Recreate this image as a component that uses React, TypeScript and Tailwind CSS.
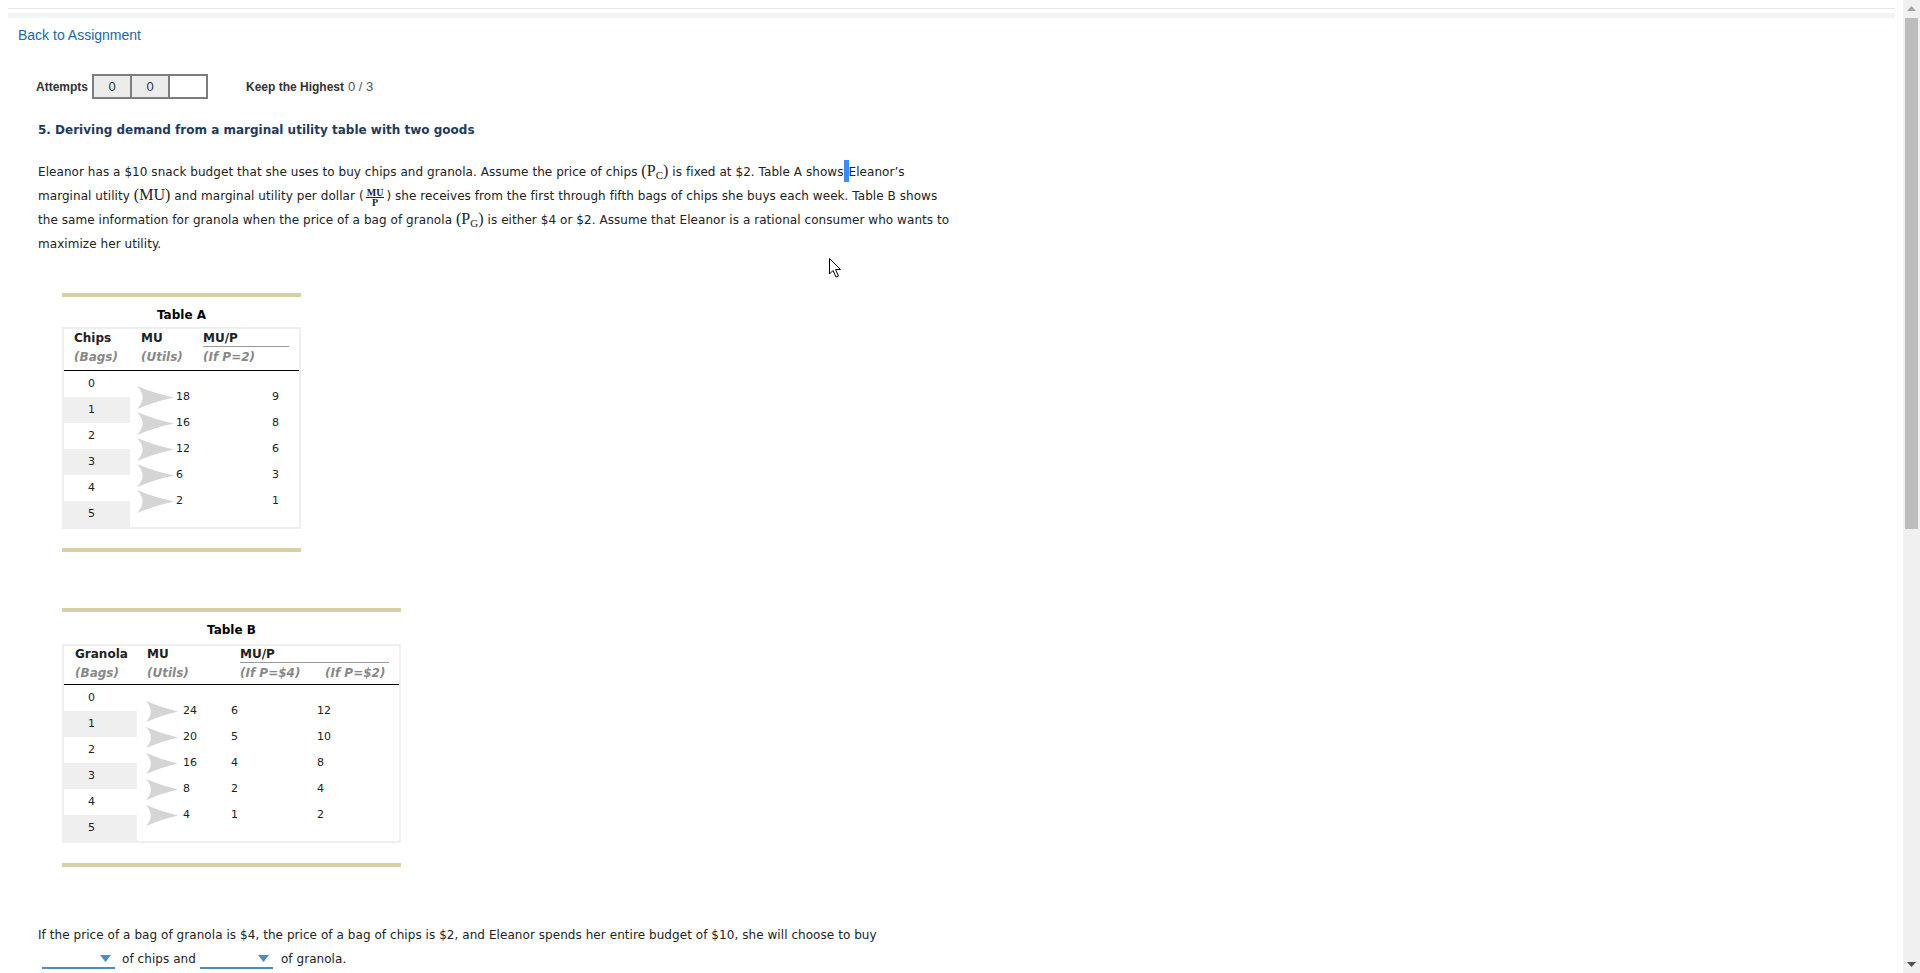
import React from "react";

const sans = "font-['DejaVu_Sans',Verdana,sans-serif]";
const arial = "font-['Liberation_Sans',Arial,sans-serif]";
const serif = "font-['Liberation_Serif','Times_New_Roman',serif]";

const chips = [
  { mu: 18, p2: 9 },
  { mu: 16, p2: 8 },
  { mu: 12, p2: 6 },
  { mu: 6, p2: 3 },
  { mu: 2, p2: 1 },
];

const granola = [
  { mu: 24, p4: 6, p2: 12 },
  { mu: 20, p4: 5, p2: 10 },
  { mu: 16, p4: 4, p2: 8 },
  { mu: 8, p4: 2, p2: 4 },
  { mu: 4, p4: 1, p2: 2 },
];

const Arrow = ({ w, h }: { w: number; h: number }) => (
  <svg width={w} height={h} viewBox="0 0 40 24" preserveAspectRatio="none" className="shrink-0">
    <path d="M0 0 Q20 8 40 12 Q20 16 0 24 Q12 12 0 0 Z" fill="#d5d5d5" />
  </svg>
);

const Caret = () => (
  <svg width="11" height="7" viewBox="0 0 11 7" className="absolute right-[4px] top-[6px]">
    <path d="M0 0 H11 L5.5 7 Z" fill="#4a8bc8" />
  </svg>
);

const Dropdown = () => (
  <span className="relative block h-[20px] w-[73px] border-b-2 border-[#4a8bc8]">
    <Caret />
  </span>
);

const Frac = () => (
  <span className="mx-[2px] inline-flex h-[18px] flex-col items-center align-middle leading-[9px]">
    <span className={`${serif} border-b border-[#222] px-[1px] text-[10px] font-bold leading-[9px]`}>MU</span>
    <span className={`${serif} text-[10px] font-bold leading-[9px]`}>P</span>
  </span>
);

const Sub = ({ s }: { s: string }) => (
  <span className={`${serif} text-[16px] leading-none`}>
    (P<sub className="text-[11px]">{s}</sub>)
  </span>
);

const TableA = () => (
  <div className="ml-[62px] mt-[37px] w-[239px]">
    <div className="h-[4px] bg-[#d9cfa6]" />
    <div className="mt-[10px] text-center text-[12px] font-bold leading-[16px] text-black">Table A</div>
    <div className="mt-[4px] border-2 border-[#efefef] bg-white">
      <div className="flex h-[42px] border-b border-black pt-[1px] text-[12px]">
        <div className="w-[66px] pl-[10px]">
          <div className="h-[17px] font-bold leading-[17px]">Chips</div>
          <div className="mt-[1px] font-bold italic leading-[18px] text-[#888]">(Bags)</div>
        </div>
        <div className="w-[73px] pl-[11px]">
          <div className="h-[17px] font-bold leading-[17px]">MU</div>
          <div className="mt-[1px] font-bold italic leading-[18px] text-[#888]">(Utils)</div>
        </div>
        <div className="flex-1">
          <div className="h-[17px] w-[86px] border-b border-[#999] font-bold leading-[16px]">MU/P</div>
          <div className="mt-[1px] font-bold italic leading-[18px] text-[#888]">(If P=2)</div>
        </div>
      </div>
      <div className="flex text-[11px]">
        <div className="w-[66px]">
          {[0, 1, 2, 3, 4, 5].map((n) => (
            <div key={n} className={`h-[26px] pl-[24px] leading-[26px] ${n % 2 ? "bg-[#efefef]" : ""}`}>
              {n}
            </div>
          ))}
        </div>
        <div className="flex-1 pt-[13px]">
          {chips.map((r) => (
            <div key={r.mu} className="flex h-[26px] items-center">
              <div className="flex w-[73px] items-center gap-[2px] pl-[7px]">
                <Arrow w={37} h={23} />
                <span>{r.mu}</span>
              </div>
              <div className="pl-[69px]">{r.p2}</div>
            </div>
          ))}
        </div>
      </div>
    </div>
    <div className="mt-[19px] h-[4px] bg-[#d9cfa6]" />
  </div>
);

const TableB = () => (
  <div className="ml-[62px] mt-[56px] w-[339px]">
    <div className="h-[4px] bg-[#d9cfa6]" />
    <div className="mt-[10px] text-center text-[12px] font-bold leading-[16px] text-black">Table B</div>
    <div className="mt-[6px] border-2 border-[#efefef] bg-white">
      <div className="flex h-[39px] border-b border-black text-[12px]">
        <div className="w-[73px] pl-[11px]">
          <div className="h-[17px] font-bold leading-[17px]">Granola</div>
          <div className="mt-[1px] font-bold italic leading-[18px] text-[#888]">(Bags)</div>
        </div>
        <div className="w-[103px] pl-[10px]">
          <div className="h-[17px] font-bold leading-[17px]">MU</div>
          <div className="mt-[1px] font-bold italic leading-[18px] text-[#888]">(Utils)</div>
        </div>
        <div className="flex-1">
          <div className="h-[17px] w-[149px] border-b border-[#999] font-bold leading-[16px]">MU/P</div>
          <div className="mt-[1px] flex font-bold italic leading-[18px] text-[#888]">
            <span className="w-[85px]">(If P=$4)</span>
            <span>(If P=$2)</span>
          </div>
        </div>
      </div>
      <div className="flex text-[11px]">
        <div className="w-[73px]">
          {[0, 1, 2, 3, 4, 5].map((n) => (
            <div key={n} className={`h-[26px] pl-[24px] leading-[26px] ${n % 2 ? "bg-[#efefef]" : ""}`}>
              {n}
            </div>
          ))}
        </div>
        <div className="flex-1 pt-[13px]">
          {granola.map((r) => (
            <div key={r.mu} className="flex h-[26px] items-center">
              <div className="flex w-[94px] items-center gap-[5px] pl-[9px]">
                <Arrow w={32} h={21} />
                <span>{r.mu}</span>
              </div>
              <div className="w-[86px]">{r.p4}</div>
              <div>{r.p2}</div>
            </div>
          ))}
        </div>
      </div>
    </div>
    <div className="mt-[20px] h-[4px] bg-[#d9cfa6]" />
  </div>
);

const Scrollbar = () => (
  <div className="flex w-[17px] shrink-0 flex-col items-center bg-[#f0f0f0]">
    <div className="flex h-[17px] items-center justify-center">
      <svg width="9" height="5" viewBox="0 0 9 5">
        <path d="M0 5 L4.5 0 L9 5 Z" fill="#a3a3a3" />
      </svg>
    </div>
    <div className="mt-[1px] h-[511px] w-[13px] bg-[#bdbdbd]" />
    <div className="flex-1" />
    <div className="flex h-[17px] items-center justify-center">
      <svg width="9" height="5" viewBox="0 0 9 5">
        <path d="M0 0 L9 0 L4.5 5 Z" fill="#505050" />
      </svg>
    </div>
  </div>
);

export default function App() {
  return (
    <div className="flex h-[973px] w-full overflow-hidden bg-white">
      <div className={`relative min-w-0 flex-1 ${sans} text-[#222]`}>
        <div className="mx-[8px] mt-[8px] h-px bg-[#e3e9e9]" />
        <div className="mx-[8px] mt-[4px] h-[5px] bg-[#f1f5f5]" />

        <div className={`${arial} mt-[9px] pl-[18px] text-[14px] leading-[16px] text-[#2167ac]`}>Back to Assignment</div>

        <div className={`${arial} mt-[31px] flex h-[25px] items-center pl-[36px] text-[12px] text-[#333]`}>
          <span className="font-bold">Attempts</span>
          <div className="ml-[4px] flex h-[25px] border-2 border-[#7d7d7d] text-[13px]">
            <div className="flex w-[38px] items-center justify-center border-r-2 border-[#7d7d7d] bg-[#ececec]">0</div>
            <div className="flex w-[38px] items-center justify-center border-r-2 border-[#7d7d7d] bg-[#ececec]">0</div>
            <div className="w-[36px] bg-white" />
          </div>
          <span className="ml-[38px] font-bold">Keep the Highest</span>
          <span className="ml-[4px] text-[13px] text-[#555]">0 / 3</span>
        </div>

        <div className="mt-[23px] pl-[38px] text-[12px] font-bold leading-[16px] text-[#1f3b5c]">
          5. Deriving demand from a marginal utility table with two goods
        </div>

        <p className="mt-[22px] pl-[38px] text-[12px] leading-[24px] tracking-[0.06px]">
          Eleanor has a $10 snack budget that she uses to buy chips and granola. Assume the price of chips <Sub s="C" /> is fixed at $2. Table A shows
          <span className="inline-block h-[22px] w-[5px] bg-[#3a8dff] align-[-6px]" />
          Eleanor’s
          <br />
          marginal utility <span className={`${serif} text-[16px] leading-none`}>(MU)</span> and marginal utility per dollar (<Frac />) she receives from the first through fifth bags of chips she buys each week. Table B shows
          <br />
          the same information for granola when the price of a bag of granola <Sub s="G" /> is either $4 or $2. Assume that Eleanor is a rational consumer who wants to
          <br />
          maximize her utility.
        </p>

        <TableA />
        <TableB />

        <div className="mt-[56px] pl-[38px] text-[12px] tracking-[0.06px]">
          <div className="leading-[24px]">
            If the price of a bag of granola is $4, the price of a bag of chips is $2, and Eleanor spends her entire budget of $10, she will choose to buy
          </div>
          <div className="flex h-[24px] items-center">
            <span className="ml-[4px]">
              <Dropdown />
            </span>
            <span className="ml-[7px]">of chips and</span>
            <span className="ml-[4px]">
              <Dropdown />
            </span>
            <span className="ml-[8px]">of granola.</span>
          </div>
        </div>

        <svg width="13" height="20" viewBox="0 0 13 20" className="absolute left-[829px] top-[258px]">
          <path d="M0.5 0.5 L0.5 16 L4 12.5 L7 19 L9.5 18 L6.5 11.5 L11.5 11.5 Z" fill="#fff" stroke="#000" strokeWidth="1" />
        </svg>
      </div>
      <Scrollbar />
    </div>
  );
}
